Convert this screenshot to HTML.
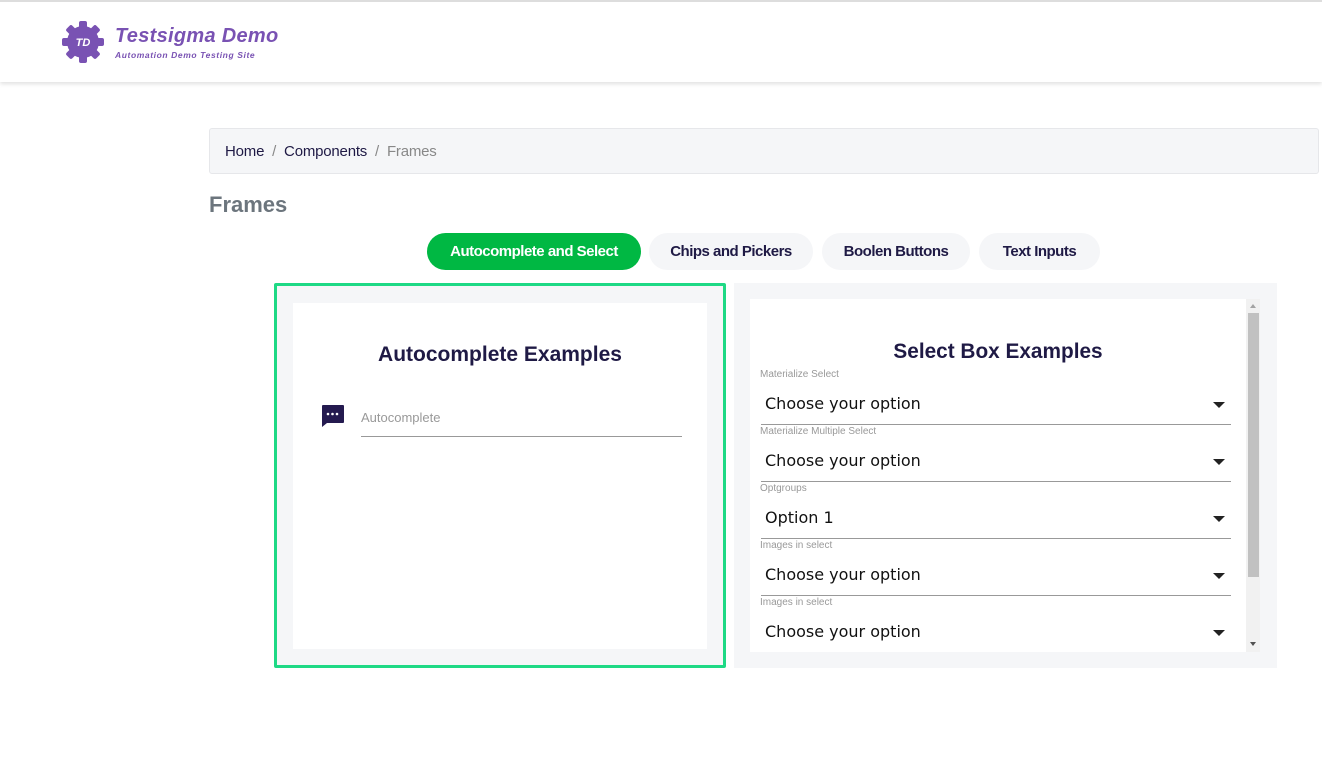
<!DOCTYPE html>
<html><head><meta charset="utf-8"><style>
*{margin:0;padding:0;box-sizing:border-box}
body{width:1322px;height:772px;background:#fff;font-family:"Liberation Sans",sans-serif;position:relative;overflow:hidden}
.a{position:absolute}
.hdr{left:0;top:0;width:1322px;height:82px;background:#fff;border-top:2px solid #ddd;box-shadow:0 2px 4px rgba(0,0,0,.12)}
.bc{left:209px;top:128px;width:1110px;height:46px;background:#f5f6f8;border:1px solid #e6e7ea;border-radius:3px;font-size:15px;color:#1f1a45;padding:14px 0 0 15px;letter-spacing:-.2px}
.bc span{color:#888}
.tab{top:233px;height:37px;border-radius:19px;background:#f5f6f8;color:#1f1a45;font-size:15px;font-weight:bold;text-align:center;line-height:37px;letter-spacing:-.5px}
.lbl{font-size:10px;color:#999;left:760px}
.sel{left:765px;font-size:16px;color:#111;font-family:"DejaVu Sans",sans-serif}
.line{left:761px;width:470px;height:1px;background:#999}
.arr{left:1213px;width:0;height:0;border-left:6px solid transparent;border-right:6px solid transparent;border-top:6px solid #222}
</style></head><body>
<div class="a hdr"></div>
<svg class="a" style="left:60px;top:20px" width="46" height="44" viewBox="0 0 46 44">
<g fill="#7952b3"><circle cx="23" cy="22" r="16"/>
<g transform="translate(23 22)"><rect x="-4" y="-21" width="8" height="42" rx="2"/><rect x="-4" y="-21" width="8" height="42" rx="2" transform="rotate(45)"/><rect x="-4" y="-21" width="8" height="42" rx="2" transform="rotate(90)"/><rect x="-4" y="-21" width="8" height="42" rx="2" transform="rotate(135)"/></g></g>
<text x="23" y="26" font-size="11" font-style="italic" font-weight="bold" fill="#fff" text-anchor="middle" font-family="Liberation Sans">TD</text></svg>
<div class="a" style="left:115px;top:25px;font-size:20px;font-weight:bold;font-style:italic;color:#7952b3;letter-spacing:.3px">Testsigma Demo</div>
<div class="a" style="left:115px;top:50px;font-size:8.5px;font-weight:bold;font-style:italic;color:#7952b3;letter-spacing:.6px">Automation Demo Testing Site</div>
<div class="a bc">Home &nbsp;<span>/</span>&nbsp; Components &nbsp;<span>/</span>&nbsp; <span>Frames</span></div>
<div class="a" style="left:209px;top:192px;font-size:22px;font-weight:bold;color:#6c757d">Frames</div>
<div class="a tab" style="left:427px;width:214px;background:#00b843;color:#fff">Autocomplete and Select</div>
<div class="a tab" style="left:649px;width:164px">Chips and Pickers</div>
<div class="a tab" style="left:822px;width:148px">Boolen Buttons</div>
<div class="a tab" style="left:979px;width:121px">Text Inputs</div>
<div class="a" style="left:274px;top:283px;width:452px;height:385px;border:3px solid #1ed985;border-radius:2px;background:#f5f6f8"></div>
<div class="a" style="left:293px;top:303px;width:414px;height:346px;background:#fff"></div>
<div class="a" style="left:293px;top:343px;width:414px;text-align:center;font-size:21px;font-weight:bold;color:#1f1a45">Autocomplete Examples</div>
<svg class="a" style="left:320px;top:404px" width="25" height="24" viewBox="0 0 25 24"><path d="M2 1h21a1 1 0 0 1 1 1v16a1 1 0 0 1-1 1H7l-5 4V2a1 1 0 0 1 1-1z" fill="#241a4f"/><circle cx="8" cy="10" r="1.3" fill="#fff"/><circle cx="12.5" cy="10" r="1.3" fill="#fff"/><circle cx="17" cy="10" r="1.3" fill="#fff"/></svg>
<div class="a" style="left:361px;top:410px;font-size:13px;color:#999">Autocomplete</div>
<div class="a" style="left:361px;top:436px;width:321px;height:1px;background:#999"></div>
<div class="a" style="left:734px;top:283px;width:543px;height:385px;background:#f5f6f8"></div>
<div class="a" style="left:750px;top:299px;width:510px;height:353px;background:#fff"></div>
<div class="a" style="left:1246px;top:299px;width:14px;height:353px;background:#f1f1f1"></div>
<div class="a" style="left:1248px;top:313px;width:11px;height:264px;background:#c1c1c1"></div>
<div class="a" style="left:1250px;top:304px;border-left:3.5px solid transparent;border-right:3.5px solid transparent;border-bottom:4px solid #a3a3a3"></div>
<div class="a" style="left:1250px;top:642px;border-left:3.5px solid transparent;border-right:3.5px solid transparent;border-top:4px solid #505050"></div>
<div class="a" style="left:750px;top:340px;width:496px;text-align:center;font-size:20.8px;font-weight:bold;color:#1f1a45">Select Box Examples</div>
<div class="a lbl" style="top:369px">Materialize Select</div>
<div class="a sel" style="top:394px">Choose your option</div><div class="a arr" style="top:402px"></div><div class="a line" style="top:424px"></div>
<div class="a lbl" style="top:426px">Materialize Multiple Select</div>
<div class="a sel" style="top:451px">Choose your option</div><div class="a arr" style="top:459px"></div><div class="a line" style="top:481px"></div>
<div class="a lbl" style="top:483px">Optgroups</div>
<div class="a sel" style="top:508px">Option 1</div><div class="a arr" style="top:516px"></div><div class="a line" style="top:538px"></div>
<div class="a lbl" style="top:540px">Images in select</div>
<div class="a sel" style="top:565px">Choose your option</div><div class="a arr" style="top:573px"></div><div class="a line" style="top:595px"></div>
<div class="a lbl" style="top:597px">Images in select</div>
<div class="a sel" style="top:622px">Choose your option</div><div class="a arr" style="top:630px"></div>
</body></html>
